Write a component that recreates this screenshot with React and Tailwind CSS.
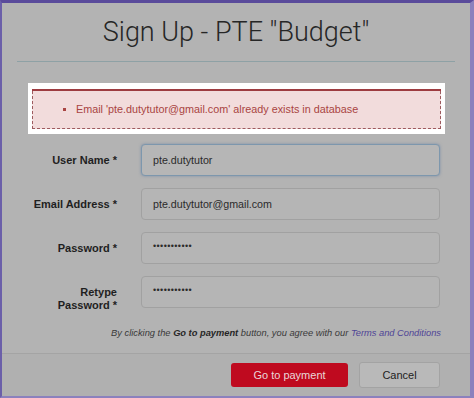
import React from 'react';

const rows = [
    { label: 'User Name *', value: 'pte.dutytutor', focused: true },
    { label: 'Email Address *', value: 'pte.dutytutor@gmail.com' },
    { label: 'Password *', value: '•••••••••••', secret: true },
];

const Field = ({ value, focused, secret }) => (
    <div
        className={
            'w-[299px] h-[32px] rounded-[4px] border flex items-center pl-[11px] text-[#2b2b2b] ' +
            (focused
                ? 'border-[#7d97ad] bg-[#b6b6b6] shadow-[0_0_3px_rgba(90,120,160,0.6)]'
                : 'border-[#a1a1a1] bg-[#b5b5b5]')
        }
    >
        <span className={secret ? 'text-[9px] tracking-[0.4px] pb-[3px]' : 'text-[10.7px]'}>{value}</span>
    </div>
);

const App = () => {
    return (
        <div
            className="w-[474px] h-[398px] flex flex-col bg-[#b3b3b3] border-t-[3px] border-l-2 border-r-4 border-b-2 border-t-[#5a4b9b] border-l-[#6b5fa9] border-r-[#8b81bd] border-b-[#8b81bd]"
            style={{ fontFamily: '"Liberation Sans", Arial, sans-serif' }}
        >
            <div className="h-[58px] flex items-center justify-center">
                <h1 className="text-[27px] font-light text-[#262626]" style={{ fontFamily: 'Roboto, "Liberation Sans", sans-serif' }}>
                    Sign Up - PTE "Budget"
                </h1>
            </div>
            <div className="mx-[15px] h-px bg-[#8ea1a5]" />

            <div className="mt-[21px] ml-[26px] mr-[25px] bg-white pt-[6px] px-[4px] pb-[5px]">
                <div className="border-t-2 border-[#9e3c41] bg-[#f2dcdc]">
                    <div className="h-[38px] border-x border-b border-dashed border-[#9e5a5e] flex items-center pl-[30px]">
                        <span className="w-[3px] h-[3px] bg-[#a94442] mr-[10px]" />
                        <span className="text-[10.8px] text-[#a94442]">
                            Email 'pte.dutytutor@gmail.com' already exists in database
                        </span>
                    </div>
                </div>
            </div>

            <div className="mt-[10px] flex flex-col gap-[12px]">
                {rows.map((r) => (
                    <div key={r.label} className="flex items-center">
                        <label className="w-[115px] text-right text-[11px] font-bold text-[#1f1f1f]">{r.label}</label>
                        <div className="ml-[24px]">
                            <Field value={r.value} focused={r.focused} secret={r.secret} />
                        </div>
                    </div>
                ))}
                <div className="flex items-start">
                    <label className="w-[115px] mt-[10px] text-right text-[11px] leading-[13px] font-bold text-[#1f1f1f]">
                        Retype
                        <br />
                        Password *
                    </label>
                    <div className="ml-[24px]">
                        <Field value="•••••••••••" secret />
                    </div>
                </div>
            </div>

            <p className="mt-[14px] pr-[29px] text-right text-[9.3px] leading-[14px] italic text-[#3a3a3a]">
                By clicking the <b className="text-[#262626]">Go to payment</b> button, you agree with our{' '}
                <span className="text-[#4f4596]">Terms and Conditions</span>
            </p>

            <div className="mt-[13px] flex-1 border-t border-[#a4a4a4] bg-[#b0b0b0] flex items-center justify-end gap-[11px] pr-[30px]">
                <button className="w-[117px] h-[24px] rounded-[3px] bg-[#bf0a1f] text-[11px] text-[#ead6d8]">
                    Go to payment
                </button>
                <button className="w-[81px] h-[26px] rounded-[3px] border border-[#a3a3a3] bg-[#b9b9b9] text-[11px] text-[#222]">
                    Cancel
                </button>
            </div>
        </div>
    );
};

export default App;
